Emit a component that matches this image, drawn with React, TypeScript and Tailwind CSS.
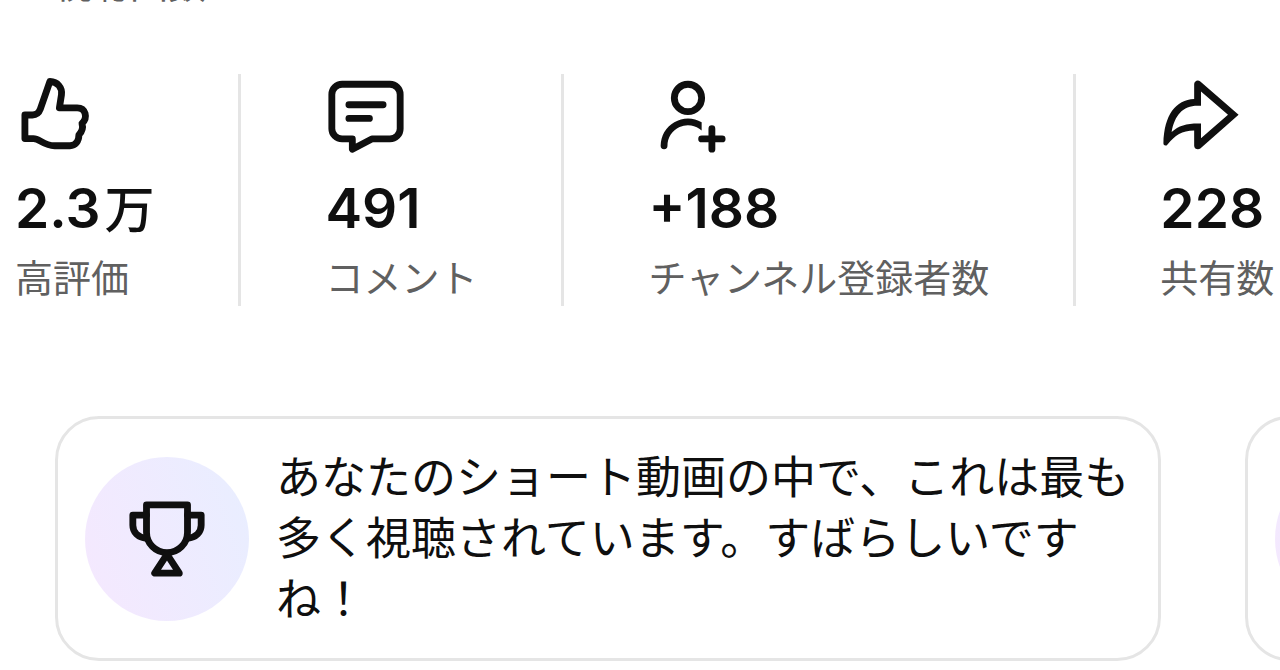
import type { ReactNode } from "react";

function Icon({ children }: { children: ReactNode }) {
  return (
    <svg
      viewBox="0 0 24 24"
      className="size-[82px] shrink-0"
      fill="none"
      stroke="currentColor"
      strokeWidth="2"
      strokeLinecap="round"
      strokeLinejoin="round"
      aria-hidden="true"
    >
      {children}
    </svg>
  );
}

function LikeIcon() {
  return (
    <Icon>
      <path d="M2.9 12h2.2c1.1 0 1.9-.6 2.3-1.7L10.2 2.2c2.3.1 3.7 1.8 3.4 3.9L13 9.9h5.2c2.5 0 3.2 2.9 1.4 4.6.4 1.3 0 2.4-.9 3.3 0 2-1.1 3.2-2.6 3.2h-4.5c-3.2 0-4.4-2.1-6.2-2.1H2.9z" />
    </Icon>
  );
}

function CommentIcon() {
  return (
    <Icon>
      <path d="M5 3h14a3 3 0 0 1 3 3v10a3 3 0 0 1-3 3h-5.3L8 22v-3H5a3 3 0 0 1-3-3V6a3 3 0 0 1 3-3z" />
      <path d="M7 9h10M7 13h6" />
    </Icon>
  );
}

function SubscriberIcon() {
  return (
    <Icon>
      <circle cx="11.7" cy="7" r="4" />
      <path
        d="M15.7 14.1A8 8 0 0 0 3.7 21a1 1 0 0 0 2 0A6 6 0 0 1 15.7 16.5z"
        fill="currentColor"
        stroke="none"
      />
      <path d="M15.7 19h6M18.7 16v6" />
    </Icon>
  );
}

function ShareIcon() {
  return (
    <Icon>
      <path
        d="M10.3 2.3c.4-.5 1-.5 1.5-.1L23 11.9l-11.2 9.9c-.6.5-1.8.2-1.8-.8v-4.5c-3.6 0-5.6 1.4-7.8 4.1-.4.6-1.2.4-1.2-.3C1.2 12 4.6 7.5 10 7.3V3c0-.3.1-.5.3-.7zM12 5.1v4.2h-1c-4.4 0-6.7 2.8-7.6 7.7 2.2-2 4.6-2.6 8.6-2.5v4.3l7.9-6.9z"
        fill="currentColor"
        fillRule="evenodd"
        stroke="none"
      />
    </Icon>
  );
}

function TrophyIcon() {
  return (
    <Icon>
      <path d="M6 2h12v8a6 6 0 0 1-12 0z" />
      <path d="M6 5H2v3c0 2 1.5 3.6 4 3.8M18 5h4v3c0 2-1.5 3.6-4 3.8" />
      <path d="M12 16.5L8.4 22h7.2z" />
    </Icon>
  );
}

const stats = [
  { icon: <LikeIcon />, value: "2.3", unit: "万", label: "高評価" },
  { icon: <CommentIcon />, value: "491", label: "コメント" },
  { icon: <SubscriberIcon />, value: "+188", label: "チャンネル登録者数" },
  { icon: <ShareIcon />, value: "228", label: "共有数" },
];

function InsightCard({ children }: { children?: ReactNode }) {
  return (
    <article className="flex shrink-0 items-center gap-[27px] rounded-[44px] border-3 border-[#e5e5e5] px-[27px] py-7">
      <div className="flex size-[164px] shrink-0 items-center justify-center rounded-full bg-linear-70 from-[#f5e8fe] to-[#e8eeff]">
        <TrophyIcon />
      </div>
      {children}
    </article>
  );
}

export default function App() {
  return (
    <main
      lang="ja"
      className="min-h-screen overflow-hidden bg-white font-['Inter','Noto_Sans_CJK_JP',sans-serif] text-[#0f0f0f]"
    >
      <p className="-mt-[44px] ml-[54px] text-[38px] leading-[56px] text-[#606060]">視聴回数</p>

      <dl className="mt-[62px] flex pl-[15px]">
        {stats.map((stat) => (
          <div
            key={stat.label}
            className="mr-[84px] flex shrink-0 flex-col whitespace-nowrap border-[#e5e5e5] not-last:border-r-3 not-last:pr-[84px]"
          >
            {stat.icon}
            <dd className="mt-5 text-[55px] leading-[64px] font-semibold">
              {stat.value}
              {stat.unit && (
                <span className="ml-1 text-[50px] leading-none font-medium">{stat.unit}</span>
              )}
            </dd>
            <dt className="mt-[10px] text-[38px] leading-[56px] text-[#606060]">{stat.label}</dt>
          </div>
        ))}
      </dl>

      <section className="mt-[110px] flex gap-[84px] pl-[55px]">
        <InsightCard>
          <p className="max-w-[19em] text-[45px] leading-[61px]">
            あなたのショート動画の中で、これは最も多く視聴されています。すばらしいですね！
          </p>
        </InsightCard>
        <InsightCard />
      </section>
    </main>
  );
}
